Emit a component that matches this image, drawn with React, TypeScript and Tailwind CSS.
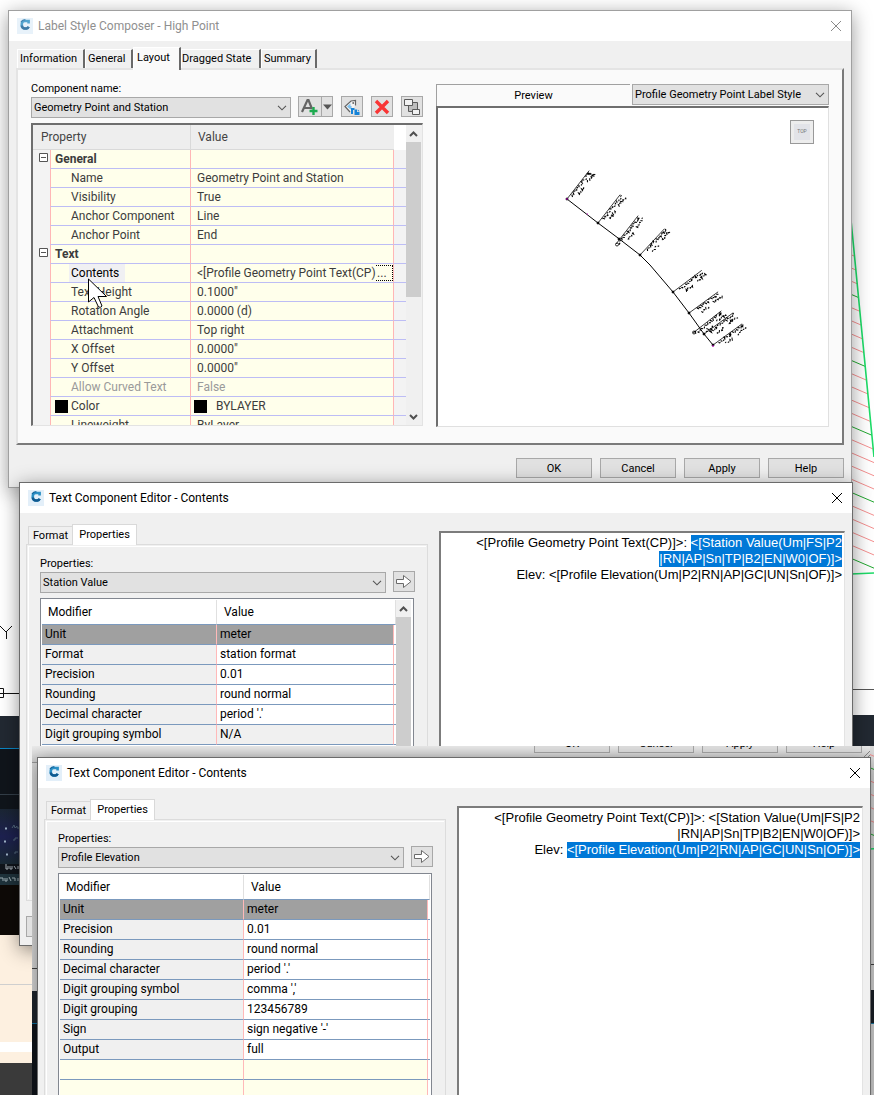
import React from "react";

/* ---------- shared controls ---------- */

function Logo({ faded = false }: { faded?: boolean }) {
  return (
    <svg width="16" height="16" viewBox="0 0 16 16" className={faded ? "shrink-0 opacity-80" : "shrink-0"} aria-hidden="true">
      <rect width="16" height="16" fill="#e3eff9" />
      <path d="M11.600 5.400 V3 H7.600 A3 3 0 0 0 4.800 6 V7.500 A3 3 0 0 0 7.800 10.500 H9.500 Q11 10.300 11.600 8.800" fill="none" stroke="#2a8fc4" strokeWidth="2.600" />
      <path d="M4.800 7.500 A3 3 0 0 0 7.800 10.500 H9.500 Q11 10.300 11.600 8.800" fill="none" stroke="#10598f" strokeWidth="2.400" />
      <path d="M4 4 Q5.500 1.600 8.400 1.600" fill="none" stroke="#16679f" strokeWidth="1.400" />
    </svg>
  );
}

function TitleBar({ title, inactive = false }: { title: string; inactive?: boolean }) {
  return (
    <header className="flex h-[30px] items-center bg-white pl-2 pr-[9px]">
      <Logo faded={inactive} />
      <h2 className={inactive ? "ml-[5px] flex-1 text-[12px] text-[#8f8f8f]" : "ml-[5px] flex-1 text-[12px] text-black"}>{title}</h2>
      <button type="button" aria-label="Close" className={inactive ? "text-[#8a8a8a]" : "text-black"}>
        <svg width="12" height="12" viewBox="0 0 12 12" fill="none" stroke="currentColor">
          <path d="M1 1 L11 11 M11 1 L1 11" />
        </svg>
      </button>
    </header>
  );
}

function DropDown({ id, label, value, className = "" }: { id: string; label?: string; value: string; className?: string }) {
  return (
    <div className={"relative h-[21px] " + className}>
      <select
        id={id}
        aria-label={label}
        defaultValue={value}
        className="block h-full w-full appearance-none border border-[#a8a8a8] bg-[#e1e1e1] pl-[2px] pr-5 text-[11px] leading-[19px] text-black"
      >
        <option>{value}</option>
      </select>
      <svg width="10" height="6" viewBox="0 0 10 6" className="pointer-events-none absolute right-[4px] top-2" fill="none" stroke="#555" strokeWidth="1.1" aria-hidden="true">
        <path d="M1 0.8 L5 4.8 L9 0.8" />
      </svg>
    </div>
  );
}

function DialogButton({ children }: { children: string }) {
  return (
    <button type="button" className="h-5 w-[76px] shrink-0 border border-[#a8a8a8] bg-[#e1e1e1] pt-px text-[11px] leading-[17px] text-black">
      {children}
    </button>
  );
}

const dialogButtons = ["OK", "Cancel", "Apply", "Help"];

function ToolButton({ label, className = "", children }: { label: string; className?: string; children: React.ReactNode }) {
  return (
    <button type="button" aria-label={label} className={"flex h-[21px] items-center justify-center border border-[#a8a8a8] bg-[#e1e1e1] " + className}>
      {children}
    </button>
  );
}

function ScrollBar({ thumb, down = false }: { thumb: string; down?: boolean }) {
  return (
    <div className="flex w-[15px] shrink-0 flex-col items-center bg-[#f0f0f0]" aria-hidden="true">
      <svg width="15" height="17" viewBox="0 0 15 17" fill="none" stroke="#505050" strokeWidth="2" className="shrink-0">
        <path d="M4 11 L7.500 7.500 L11 11" />
      </svg>
      <div className={"w-full bg-[#cdcdcd] " + thumb} />
      {down && (
        <svg width="15" height="17" viewBox="0 0 15 17" fill="none" stroke="#505050" strokeWidth="2" className="mt-auto shrink-0">
          <path d="M4 7 L7.500 10.500 L11 7" />
        </svg>
      )}
    </div>
  );
}

/* ---------- label style composer ---------- */

type Prop = { name: string; value?: string; kind?: "group" | "selected" | "disabled" | "color" };

const props: Prop[] = [
  { name: "General", kind: "group" },
  { name: "Name", value: "Geometry Point and Station" },
  { name: "Visibility", value: "True" },
  { name: "Anchor Component", value: "Line" },
  { name: "Anchor Point", value: "End" },
  { name: "Text", kind: "group" },
  { name: "Contents", value: "<[Profile Geometry Point Text(CP)", kind: "selected" },
  { name: "Text Height", value: '0.1000"' },
  { name: "Rotation Angle", value: "0.0000 (d)" },
  { name: "Attachment", value: "Top right" },
  { name: "X Offset", value: '0.0000"' },
  { name: "Y Offset", value: '0.0000"' },
  { name: "Allow Curved Text", value: "False", kind: "disabled" },
  { name: "Color", value: "BYLAYER", kind: "color" },
  { name: "Lineweight", value: "ByLayer" },
];

function PropertyRow({ p }: { p: Prop }) {
  const tone = p.kind === "disabled" ? "text-[#9a9a9a]" : "text-[#3c3c3c]";
  return (
    <tr className={"h-[19px] text-[12px] leading-[18px] " + tone}>
      <td className="bg-[#f3f3f3] p-0">
        {p.kind === "group" && (
          <div className="-mt-1 flex justify-end pr-[2px]">
            <svg width="9" height="9" viewBox="0 0 9 9" fill="#fff" stroke="#555" aria-hidden="true">
              <path d="M0.500 0.500 H8.500 V8.500 H0.500 Z M2 4.500 H7" />
            </svg>
          </div>
        )}
      </td>
      <td className="border-b border-l border-b-[#bdbdf5] border-l-[#ffb6b6] bg-[#ffffeb] p-0">
        {p.kind === "group" ? (
          <div className="pl-1 font-bold">{p.name}</div>
        ) : p.kind === "selected" ? (
          <div className="ml-[18px] w-14 bg-[#f0f0f3] pl-[2px] text-black">{p.name}</div>
        ) : p.kind === "color" ? (
          <div className="flex items-center gap-[3px] pl-1">
            <span className="size-[13px] bg-black" />
            {p.name}
          </div>
        ) : (
          <div className="pl-5">{p.name}</div>
        )}
      </td>
      <td className="border-x border-b border-x-[#ffb6b6] border-b-[#bdbdf5] bg-[#ffffeb] p-0">
        {p.kind === "selected" ? (
          <div className="flex justify-between whitespace-nowrap pl-[6px]">
            {p.value}
            <button type="button" aria-label="Edit contents" className="mt-px h-4 w-[18px] border border-l-0 border-dotted border-black pr-1 text-[12px] leading-[13px]">
              ...
            </button>
          </div>
        ) : p.kind === "color" ? (
          <div className="flex items-center gap-[9px] pl-[3px]">
            <span className="size-[13px] bg-black" />
            {p.value}
          </div>
        ) : (
          <div className="pl-[6px]">{p.value}</div>
        )}
      </td>
      <td className="border-b border-b-[#bdbdf5] bg-[#f3f3f3] p-0" />
    </tr>
  );
}

function PropertyGrid() {
  return (
    <div className="flex h-[303px] overflow-hidden border-b border-l-2 border-r border-t-2 border-b-[#e3e3e3] border-l-[#6e6e6e] border-r-[#e3e3e3] border-t-[#6e6e6e] bg-[#f0f0f0] pr-px">
      <div className="min-w-0 flex-1 overflow-hidden">
        <table className="w-full table-fixed border-separate border-spacing-0">
          <colgroup>
            <col className="w-[17px]" />
            <col className="w-[140px]" />
            <col />
            <col className="w-3" />
          </colgroup>
          <thead>
            <tr className="h-[25px] text-left text-[12px] text-[#444]">
              <th colSpan={2} className="border-b border-[#d9d9d9] bg-[#eee] p-0 pl-2 font-normal">Property</th>
              <th className="border-b border-l border-[#d9d9d9] bg-[#eee] p-0 pl-[7px] font-normal">Value</th>
              <th className="bg-white p-0" />
            </tr>
          </thead>
          <tbody>
            {props.map((p) => (
              <PropertyRow key={p.name} p={p} />
            ))}
          </tbody>
        </table>
      </div>
      <ScrollBar thumb="h-[155px]" down />
    </div>
  );
}

/* Alignment with small rotated station labels at each geometry point. */
const alignment = "M567 199 L598 223 L618 238 L640 255 L650 265 L673 292 L689 313 L704 334 L713 345";
const stations = [
  { x: 567, y: 199, a: -52, s: 5 },
  { x: 598, y: 223, a: -52, s: 6 },
  { x: 616, y: 244, a: -52, s: 2 },
  { x: 640, y: 255, a: -47, s: 8 },
  { x: 673, y: 292, a: -37, s: 7 },
  { x: 689, y: 313, a: -36, s: 9 },
  { x: 693, y: 333, a: -38, s: 2 },
  { x: 704, y: 334, a: -36, s: 6 },
  { x: 713, y: 345, a: -36, s: 6 },
];

function scribble(from: number, to: number, y: number, seed: number) {
  let d = "";
  let r = seed * 7919 + 13;
  const next = () => {
    r = (r * 1103515245 + 12345) % 2147483648;
    return r / 2147483648;
  };
  for (let x = from; x < to; x += 2.4) {
    const top = y - 1.4;
    d += `M${x} ${top + next() * 3} L${x + next() * 1.6} ${top + next() * 3} L${x + 1.5} ${top + next() * 3} `;
  }
  return d;
}

function PreviewDrawing() {
  return (
    <svg viewBox="438 108 390 318" className="block h-[318px] w-full" fill="none" stroke="#000" aria-label="Alignment preview">
      <path d={alignment} strokeWidth="1" />
      {stations.map((s, i) => (
        <g key={i} transform={`translate(${s.x} ${s.y}) rotate(${s.a})`}>
          <path d="M0 0 H36" strokeWidth="0.7" />
          <path d={scribble(s.s, 35, 1.6, i + 1)} strokeWidth="1.100" />
          <path d={scribble(11, 20, 6.500, i + 21)} strokeWidth="1" />
          <path d={scribble(26, 36, 5.500, i + 41)} strokeWidth="1" />
        </g>
      ))}
      {[[567, 199], [598, 223], [619, 239], [640, 255], [673, 292], [689, 313], [704, 334], [713, 345]].map(([x, y]) => (
        <circle key={x} cx={x} cy={y} r="1" fill="#000" />
      ))}
      <circle cx="617" cy="244.500" r="1.500" strokeWidth="0.8" />
      <circle cx="694" cy="332.500" r="1.500" strokeWidth="0.8" />
      <path d="M587 214 h1 M566 199 h2 M712 346 h2" stroke="#d000d0" />
    </svg>
  );
}

const composerTabs = [
  { name: "Information", width: "w-[68px] pl-[2px]" },
  { name: "General", width: "w-[48px] pl-[2px]" },
  { name: "Layout", width: "w-[48px] pl-[3px]" },
  { name: "Dragged State", width: "w-[80px]" },
  { name: "Summary", width: "w-[56px] pl-[2px]" },
];

function LabelStyleComposer() {
  return (
    <section className="absolute left-2 right-[22px] top-[10px] border border-[#a0a0a0] bg-[#f0f0f0] shadow-[0_4px_18px_rgba(0,0,0,0.4)]">
      <TitleBar title="Label Style Composer - High Point" inactive />
      <div className="px-[7px] pb-[9px] pt-[7px]">
        <div role="tablist" className="flex h-5 items-end pl-px">
          {composerTabs.map((t) =>
            t.name === "Layout" ? (
              <button key={t.name} type="button" role="tab" aria-selected="true" className={"z-10 -mb-[2px] h-[23px] border-l border-t border-white border-r-2 border-r-[#696969] bg-[#fafafa] pb-px text-left text-[11px] " + t.width}>
                {t.name}
              </button>
            ) : (
              <button key={t.name} type="button" role="tab" aria-selected="false" className={"h-[19px] whitespace-nowrap border-l border-r-2 border-t border-white border-r-[#696969] text-left text-[11px] leading-4 " + t.width}>
                {t.name}
              </button>
            ),
          )}
        </div>
        <div role="tabpanel" className="grid grid-cols-[392px_1fr] gap-[13px] border-b-2 border-l-2 border-r-2 border-t-2 border-b-[#7a7a7a] border-l-[#e4e4e4] border-r-[#7a7a7a] border-t-[#e4e4e4] bg-[#fafafa] pb-4 pl-[13px] pr-[13px] pt-[13px]">
          <div className="min-w-0">
            <label htmlFor="component" className="block h-[13px] text-[11px] leading-3">Component name:</label>
            <div className="mb-[5px] flex items-start">
              <DropDown id="component" value="Geometry Point and Station" className="mr-[7px] mt-px min-w-0 flex-1" />
              <div className="mr-2 flex">
                <ToolButton label="Create text component" className="w-[23px] border-r-0">
                  <svg width="20" height="18" viewBox="0 0 20 18" fill="none" aria-hidden="true">
                    <path d="M2 14 L7.500 2 H8.500 L12 11 M4.500 10 H11" stroke="#646464" strokeWidth="2.200" />
                    <path d="M9.500 13 H17.500 M13.500 9 V17" stroke="#1eab50" strokeWidth="2.400" />
                  </svg>
                </ToolButton>
                <ToolButton label="Component types" className="w-[12px]">
                  <svg width="9" height="6" viewBox="0 0 9 6" className="shrink-0" aria-hidden="true">
                    <path d="M0 0.500 H9 L4.500 5.500 Z" fill="#555" />
                  </svg>
                </ToolButton>
              </div>
              <ToolButton label="Copy component" className="mr-2 w-[22px]">
                <svg width="18" height="18" viewBox="0 0 18 18" fill="none" aria-hidden="true">
                  <path d="M7 14 L2 8.500 L8 3 L12.500 2.500 V7.500" stroke="#646464" strokeWidth="1.200" fill="#f4f4f4" />
                  <circle cx="10.200" cy="5" r="0.900" fill="#646464" />
                  <path d="M4 8.500 L7.500 5.500 V8 L9 8.500 L7.500 11.500 Z" fill="#7cc0ee" />
                  <path d="M8 16 V10 H11.500 V12 H10 V16 Z" fill="#1583d8" />
                  <path d="M11.500 11.500 H14 V14 H16.500 V17 H11.500 Z" fill="#1583d8" />
                  <path d="M14.800 11.500 L16.500 13.200 H14.800 Z" fill="#1583d8" />
                </svg>
              </ToolButton>
              <ToolButton label="Delete component" className="mr-2 w-[22px]">
                <svg width="16" height="16" viewBox="0 0 16 16" aria-hidden="true">
                  <path d="M2 2 L14 14 M14 2 L2 14" stroke="#f93535" strokeWidth="3.400" />
                </svg>
              </ToolButton>
              <ToolButton label="Component draw order" className="w-[22px]">
                <svg width="18" height="18" viewBox="0 0 18 18" className="shrink-0" fill="none" stroke="#5a5a5a" aria-hidden="true">
                  <path d="M5.500 4.500 H14.500 V13.500 H5.500 Z" fill="#bdbdbd" />
                  <path d="M1.500 1.500 H9.500 V7.500 H1.500 Z M9.500 11.500 H16.500 V16.500 H9.500 Z" fill="#f2f2f2" />
                </svg>
              </ToolButton>
            </div>
            <PropertyGrid />
          </div>
          <div className="min-w-0 pt-px">
            <div className="flex h-[22px] gap-[2px]">
              <div className="flex-1 border-l border-t border-[#a0a0a0] text-center text-[11px] leading-[21px]">Preview</div>
              <DropDown id="preview-style" label="Preview style" value="Profile Geometry Point Label Style" className="w-[197px]" />
            </div>
            <div className="relative border-b border-l-2 border-r border-t-2 border-b-[#e0e0e0] border-l-[#6e6e6e] border-r-[#e0e0e0] border-t-[#6e6e6e] bg-white">
              <PreviewDrawing />
              <div className="absolute right-[14px] top-3 size-6 border border-[#999] bg-[#ededed] p-[3px]">
                <div className="flex size-4 items-center justify-center bg-[#e2e3e8] text-[5px] text-[#777]">TOP</div>
              </div>
            </div>
          </div>
        </div>
        <div className="mt-[13px] flex justify-end gap-2">
          {dialogButtons.map((b) => (
            <DialogButton key={b}>{b}</DialogButton>
          ))}
        </div>
      </div>
      <svg width="22" height="32" viewBox="0 0 22 32" className="absolute left-[79px] top-[267px]" aria-hidden="true">
        <path d="M0.500 1 V24 L6 19.500 L10.500 29 Q12.500 30 14 28 L10 18.500 H18.500 Z" fill="#fff" stroke="#000" />
      </svg>
    </section>
  );
}

/* ---------- text component editor ---------- */

type Modifier = { name: string; value: string; off?: boolean };
type Chunk = { text: string; marked?: boolean };

function ModifierTable({ rows, blanks, split, scroll }: { rows: Modifier[]; blanks: number; split: string; scroll: boolean }) {
  return (
    <div className="flex min-h-0 flex-1 overflow-hidden border border-[#828790] bg-white p-px pb-0">
      <div className="min-w-0 flex-1">
        <table className="w-full table-fixed border-separate border-spacing-0 text-[12px] text-black">
          <colgroup>
            <col className={split} />
            <col />
            <col className="w-[2px]" />
          </colgroup>
          <thead>
            <tr className="h-[25px] text-left">
              <th className="border-b border-r border-b-[#7b99bd] border-r-[#e0e0e0] p-0 pl-[6px] font-normal">Modifier</th>
              <th colSpan={2} className="border-b border-r border-b-[#7b99bd] border-r-[#e0e0e0] p-0 pl-[7px] font-normal">Value</th>
            </tr>
          </thead>
          <tbody>
            {rows.map((r, i) => {
              const fill = i === 0 ? "bg-[#a0a0a0]" : "bg-[#f0f0f0]";
              const valueFill = i === 0 ? "bg-[#a0a0a0]" : r.off ? "bg-[#f0f0f0]" : "bg-white";
              return (
                <tr key={r.name} className="h-5 leading-[19px]">
                  <td className={"border-b border-r border-b-[#7b99bd] border-r-[#ffb9b9] p-0 pl-[3px] " + fill}>{r.name}</td>
                  <td className={"border-b border-r border-b-[#7b99bd] border-r-[#ffb9b9] p-0 pl-[3px] " + valueFill}>{r.value}</td>
                  <td className="border-b border-b-[#7b99bd] p-0" />
                </tr>
              );
            })}
            {Array.from({ length: blanks }, (_, i) => (
              <tr key={i} className="h-5">
                <td className="border-b border-r border-b-[#7b99bd] border-r-[#ffb9b9] bg-[#ffffeb] p-0" />
                <td className="border-b border-r border-b-[#7b99bd] border-r-[#ffb9b9] bg-[#ffffeb] p-0" />
                <td className="border-b border-b-[#7b99bd] p-0" />
              </tr>
            ))}
          </tbody>
        </table>
      </div>
      {scroll && (
        <div className="flex pr-px">
          <ScrollBar thumb="h-[160px]" />
        </div>
      )}
    </div>
  );
}

function TextComponentEditor(props: {
  id: string;
  property: string;
  rows: Modifier[];
  blanks?: number;
  split: string;
  scroll?: boolean;
  lines: Chunk[][];
}) {
  return (
    <section className="flex h-full flex-col border border-[#6b6b6b] bg-[#f0f0f0] shadow-[0_4px_18px_rgba(0,0,0,0.45)]">
      <TitleBar title="Text Component Editor - Contents" />
      <div className="flex min-h-0 flex-1 pb-11 pl-[6px] pr-[7px] pt-[11px]">
        <div className="flex min-h-0 w-[402px] shrink-0 flex-col">
          <div role="tablist" className="flex h-5 items-end pl-[2px]">
            <button type="button" role="tab" aria-selected="false" className="h-[18px] w-[45px] border border-b-0 border-[#d9d9d9] pt-px text-[11px] leading-4">
              Format
            </button>
            <button type="button" role="tab" aria-selected="true" className="z-10 -mb-px -ml-px h-[21px] w-[65px] border border-b-0 border-[#d9d9d9] bg-white pb-px text-[11px] leading-[18px]">
              Properties
            </button>
          </div>
          <div role="tabpanel" className="flex min-h-0 flex-1 flex-col border border-[#dcdcdc] p-px">
            <div className="flex min-h-0 flex-1 flex-col border-l border-t border-white px-[11px] pt-[10px]">
              <label htmlFor={props.id} className="block h-[15px] text-[11px] leading-[14px]">Properties:</label>
              <div className="mb-[5px] flex items-start">
                <DropDown id={props.id} value={props.property} className="mr-[7px] min-w-0 flex-1" />
                <ToolButton label="Insert property" className="-mt-px w-[22px]">
                  <svg width="18" height="15" viewBox="0 0 18 15" aria-hidden="true">
                    <path d="M1.500 5.500 H8.500 V1.500 L16 7.500 L8.500 13.500 V9.500 H1.500 Z" fill="#fff" stroke="#6a6a6a" />
                  </svg>
                </ToolButton>
              </div>
              <div className="flex min-h-0 flex-1 pb-3 pr-px">
                <ModifierTable rows={props.rows} blanks={props.blanks ?? 0} split={props.split} scroll={props.scroll ?? false} />
              </div>
            </div>
          </div>
        </div>
        <div
          role="textbox"
          aria-multiline="true"
          aria-label="Component text"
          className="ml-[11px] mt-[7px] min-w-0 flex-1 border-b border-l-2 border-r border-t-2 border-b-[#e3e3e3] border-l-[#7c7c7c] border-r-[#e3e3e3] border-t-[#7c7c7c] bg-white pr-[2px] pt-[2px] text-right font-['Liberation_Sans',Arial,sans-serif] text-[13px] leading-4 text-black"
        >
          {props.lines.map((line, i) => (
            <p key={i} className="h-4 whitespace-nowrap">
              {line.map((c) => (
                <span key={c.text} className={c.marked ? "inline-block bg-[#0078d7] text-white" : ""}>{c.text}</span>
              ))}
            </p>
          ))}
        </div>
      </div>
    </section>
  );
}

/* ---------- drawing area behind the dialogs ---------- */

function Hatch({ id, dx, dy }: { id: string; dx: number; dy: number }) {
  return (
    <g transform={`translate(${dx} ${dy})`}>
      <clipPath id={id}>
        <path d="M851 220 L874 457 V572 L851 574 Z" />
      </clipPath>
      <g clipPath={`url(#${id})`}>
        {Array.from({ length: 24 }, (_, i) => {
          const k = i - 3;
          const y = 294.3 + 13.2 * k;
          return <path key={k} d={`M851 ${y} l24 10.300`} stroke={k % 5 === 0 ? "#22a830" : "#f59090"} fill="none" />;
        })}
      </g>
      <path d="M851 220 L874 457 M851 574 L874 573" stroke="#1ddc68" strokeWidth="1.600" fill="none" />
    </g>
  );
}

function Backdrop() {
  return (
    <svg className="absolute left-0 top-0" width="874" height="1095" viewBox="0 0 874 1095" fill="none" aria-hidden="true">
      <defs>
        <linearGradient id="photo" x1="0" y1="0" x2="0" y2="1">
          <stop offset="0" stopColor="#1b2634" />
          <stop offset="0.5" stopColor="#1d2150" />
          <stop offset="1" stopColor="#1a2a35" />
        </linearGradient>
      </defs>
      <Hatch id="hatch-main" dx={0} dy={0} />
      <path d="M0 626 L6 632 L12 626 M6.500 632 V639 M0 688.500 H3.500 V697.500 H0 M0 693.500 H20" stroke="#111" />
      <path d="M852 689.500 H874" stroke="#555" />
      <rect x="852" y="715" width="22" height="31" fill="#222932" />
      <rect x="0" y="716" width="20" height="32" fill="#222932" />
      <rect x="0" y="748" width="20" height="187" fill="#10151b" />
      <path d="M0 748.500 H20" stroke="#0b86c4" />
      <path d="M0 794.500 H20" stroke="#333e48" />
      <rect x="0" y="809" width="20" height="55" fill="url(#photo)" />
      <path d="M5 828.500 h2 M4 841.500 h2 M6 854.500 h2" stroke="#9fb3c8" strokeWidth="2" />
      <path d="M12 828 l2 -3 l1 3 l2 -2 v2 h2 M13 840 h2 v-2 h3 M15 854 v-2 h3" stroke="#52687c" />
      <path d="M6 864 v5 h2 v-3 M10 866 v3 h2 v-3 M14 866 l2 3 M18 866 v3" stroke="#a9b3ba" />
      <rect x="0" y="874" width="20" height="11" fill="#1f333c" />
      <path d="M0 878 h3 v3 M5 878 v3 h2 v-3 M9 877 l2 4 M12 878 h3 v3 M18 878 v3" stroke="#9fb0b5" />
      <rect x="0" y="885" width="20" height="50" fill="#0e0a07" />
      <rect x="0" y="935" width="33" height="160" fill="#fdf0e0" />
      <path d="M0 984.500 H33" stroke="#cfcfcf" />
      <rect x="0" y="1042" width="33" height="10" fill="#fff" />
      <rect x="0" y="1063" width="33" height="32" fill="#3a3a3a" />
    </svg>
  );
}

/* Second capture pasted over the lower part of the page. */
function LowerCapture() {
  return (
    <div className="absolute bottom-0 left-8 right-0 top-[746px] overflow-hidden bg-[#dcdcdc]">
      <svg className="absolute left-0 top-0" width="842" height="349" viewBox="0 0 842 349" fill="none" aria-hidden="true">
        <Hatch id="hatch-lower" dx={-14} dy={-471} />
        <path d="M0 222.500 H6 M837 218.500 H842" stroke="#444" />
        <rect x="0" y="245" width="6" height="33" fill="#1e252d" />
        <rect x="0" y="278" width="6" height="71" fill="#10151b" />
        <path d="M0 277.500 H6" stroke="#0b6f9e" />
        <rect x="837" y="244" width="5" height="33" fill="#1c2129" />
        <path d="M837 277.500 H842" stroke="#1b7ba5" />
      </svg>
      <div className="absolute left-0 right-1 top-0 flex h-[17px] items-end justify-end gap-2 overflow-hidden border-b border-[#999] bg-linear-to-b from-[#ebebeb] to-[#cfcfcf] pb-[9px] pr-2">
        {dialogButtons.map((b) => (
          <DialogButton key={b}>{b}</DialogButton>
        ))}
      </div>
      <svg className="absolute right-1 top-1" width="8" height="8" viewBox="0 0 8 8" stroke="#888" fill="none" aria-hidden="true">
        <path d="M1 8 L8 1 M5 8 L8 5" />
      </svg>
      <div className="absolute -bottom-24 left-[5px] right-[3px] top-[11px]">
        <TextComponentEditor
          id="property-elevation"
          property="Profile Elevation"
          split="w-[184px]"
          blanks={4}
          rows={[
            { name: "Unit", value: "meter" },
            { name: "Precision", value: "0.01" },
            { name: "Rounding", value: "round normal" },
            { name: "Decimal character", value: "period '.'" },
            { name: "Digit grouping symbol", value: "comma ','" },
            { name: "Digit grouping", value: "123456789" },
            { name: "Sign", value: "sign negative '-'" },
            { name: "Output", value: "full" },
          ]}
          lines={[
            [{ text: "<[Profile Geometry Point Text(CP)]>: <[Station Value(Um|FS|P2" }],
            [{ text: "|RN|AP|Sn|TP|B2|EN|W0|OF)]>" }],
            [{ text: "Elev: " }, { text: "<[Profile Elevation(Um|P2|RN|AP|GC|UN|Sn|OF)]>", marked: true }],
          ]}
        />
      </div>
    </div>
  );
}

export default function App() {
  return (
    <main className="relative h-screen overflow-hidden bg-white font-[Roboto,'Noto_Sans',sans-serif] text-black">
      <Backdrop />
      <LabelStyleComposer />
      <div className="absolute left-[19px] right-[21px] top-[482px] h-[464px]">
        <TextComponentEditor
          id="property-station"
          property="Station Value"
          split="w-[175px]"
          scroll
          rows={[
            { name: "Unit", value: "meter" },
            { name: "Format", value: "station format" },
            { name: "Precision", value: "0.01" },
            { name: "Rounding", value: "round normal" },
            { name: "Decimal character", value: "period '.'" },
            { name: "Digit grouping symbol", value: "N/A", off: true },
          ]}
          lines={[
            [{ text: "<[Profile Geometry Point Text(CP)]>: " }, { text: "<[Station Value(Um|FS|P2", marked: true }],
            [{ text: "|RN|AP|Sn|TP|B2|EN|W0|OF)]>", marked: true }],
            [{ text: "Elev: <[Profile Elevation(Um|P2|RN|AP|GC|UN|Sn|OF)]>" }],
          ]}
        />
        <div className="absolute bottom-[9px] left-[7px] h-[21px] w-[76px] border border-[#a8a8a8] bg-[#e1e1e1]" />
      </div>
      <LowerCapture />
    </main>
  );
}
